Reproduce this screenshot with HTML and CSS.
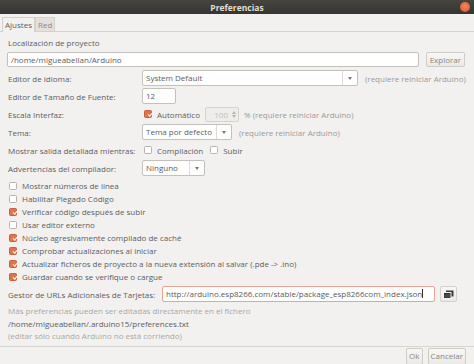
FILE: index.html
```html
<!DOCTYPE html>
<html lang="es">
<head>
    <meta charset="UTF-8">
    <title>Preferencias</title>
    <link rel="stylesheet" href="styles.css">
</head>
<body>
    <div class="window">
        <div class="titlebar">
            <span class="title">Preferencias</span>
            <span class="close"></span>
        </div>

        <div class="tabs">
            <span class="tab active">Ajustes</span>
            <span class="tab">Red</span>
        </div>

        <div class="panel">
            <div class="top-label">Localización de proyecto</div>
            <div class="path-row">
                <div class="field path">/home/migueabellan/Arduino</div>
                <span class="btn">Explorar</span>
            </div>

            <div class="form-rows">
                <div class="row">
                    <span class="row-label">Editor de idioma:</span>
                    <div class="select lang">System Default<span class="arrow"></span></div>
                    <span class="hint">(requiere reiniciar Arduino)</span>
                </div>
                <div class="row">
                    <span class="row-label">Editor de Tamaño de Fuente:</span>
                    <div class="field size">12</div>
                </div>
                <div class="row">
                    <span class="row-label">Escala Interfaz:</span>
                    <span class="check on"></span>
                    <span class="opt">Automático</span>
                    <div class="spin">100<span class="spin-arrows"></span></div>
                    <span class="hint dark">% (requiere reiniciar Arduino)</span>
                </div>
                <div class="row">
                    <span class="row-label">Tema:</span>
                    <div class="select theme">Tema por defecto<span class="arrow"></span></div>
                    <span class="hint">(requiere reiniciar Arduino)</span>
                </div>
                <div class="row">
                    <span class="row-label">Mostrar salida detallada mientras:</span>
                    <span class="check"></span>
                    <span class="opt">Compilación</span>
                    <span class="check"></span>
                    <span class="opt">Subir</span>
                </div>
                <div class="row">
                    <span class="row-label">Advertencias del compilador:</span>
                    <div class="select warn">Ninguno<span class="arrow"></span></div>
                </div>
            </div>

            <ul class="checks">
                <li><span class="check"></span>Mostrar números de línea</li>
                <li><span class="check"></span>Habilitar Plegado Código</li>
                <li><span class="check on"></span>Verificar código después de subir</li>
                <li><span class="check"></span>Usar editor externo</li>
                <li><span class="check on"></span>Núcleo agresivamente compilado de caché</li>
                <li><span class="check on"></span>Comprobar actualizaciones al iniciar</li>
                <li><span class="check on"></span>Actualizar ficheros de proyecto a la nueva extensión al salvar (.pde -&gt; .ino)</li>
                <li><span class="check on"></span>Guardar cuando se verifique o cargue</li>
            </ul>

            <div class="url-row">
                <span class="url-label">Gestor de URLs Adicionales de Tarjetas:</span>
                <div class="field url">http://arduino.esp8266.com/stable/package_esp8266com_index.json<span class="caret"></span></div>
                <span class="icon-btn">
                    <svg width="11" height="9" viewBox="0 0 11 9">
                        <rect x="3" y="0.5" width="7.5" height="6" fill="#3a3a3a"/>
                        <rect x="0.5" y="2.5" width="7.5" height="6" fill="#2b2b2b" stroke="#f4f4f4" stroke-width="1"/>
                        <rect x="1.5" y="4" width="5.5" height="3.5" fill="#4a4a4a"/>
                    </svg>
                </span>
            </div>

            <div class="notes">
                <div>Más preferencias pueden ser editadas directamente en el fichero</div>
                <div class="dark">/home/migueabellan/.arduino15/preferences.txt</div>
                <div>(editar sólo cuando Arduino no está corriendo)</div>
            </div>
        </div>

        <div class="footer">
            <span class="btn">Ok</span>
            <span class="btn">Cancelar</span>
        </div>
    </div>
</body>
</html>
```

FILE: styles.css
```css
:root {
    --bg: #f2f1f0;
    --text: #5c5c5c;
    --muted: #9b9994;
    --border: #c4c0ba;
    --accent: #e2744c;
}

* {
    margin: 0;
    padding: 0;
    box-sizing: border-box;
}

body {
    width: 474px;
    height: 364px;
    overflow: hidden;
    background-color: var(--bg);
    font-family: 'Open Sans', 'Noto Sans', sans-serif;
    font-size: 8px;
    color: var(--text);
    white-space: nowrap;
}

.window {
    height: 364px;
    display: flex;
    flex-direction: column;
}

/* barra de título */
.titlebar {
    height: 14px;
    flex-shrink: 0;
    background: linear-gradient(#45443f, #363531);
    display: flex;
    align-items: center;
    justify-content: center;
    position: relative;
}

.title {
    color: #e2ded6;
    font-weight: 700;
    font-size: 8.5px;
}

.close {
    position: absolute;
    right: 4px;
    top: 2px;
    width: 10px;
    height: 10px;
    border-radius: 50%;
    background: radial-gradient(circle at 50% 40%, #f7845b, #e0512a);
}

/* pestañas */
.tabs {
    height: 18px;
    flex-shrink: 0;
    display: flex;
    align-items: flex-end;
    padding-left: 2px;
    border-bottom: 1px solid #d4d0ca;
}

.tab {
    height: 14px;
    padding: 0 2px;
    line-height: 13px;
    color: #8a8782;
    background-color: #e4e1dc;
    border: 1px solid #d4d0ca;
    border-bottom: none;
}

.tab.active {
    color: var(--text);
    background-color: var(--bg);
    height: 15px;
    margin-bottom: -1px;
}

/* contenido */
.panel {
    flex: 1;
    padding: 5px 9px 0 8px;
}

.top-label {
    height: 12px;
    line-height: 12px;
}

.path-row {
    margin-top: 3px;
    display: flex;
    height: 15px;
    margin-left: -1px;
}

.field {
    background-color: white;
    border: 1px solid var(--border);
    border-radius: 2px;
    height: 15px;
    line-height: 13px;
    padding: 0 3px;
    overflow: hidden;
}

.path {
    flex: 1;
}

.btn {
    display: inline-block;
    height: 15px;
    line-height: 13px;
    padding: 0 3px;
    margin-left: 7px;
    border: 1px solid #cfcbc5;
    border-radius: 2px;
    background: linear-gradient(#f8f7f6, #ebe9e6);
    color: #8a8782;
}

.form-rows {
    margin-top: 3px;
    display: flex;
    flex-direction: column;
    gap: 2px;
}

.row {
    height: 16px;
    display: flex;
    align-items: center;
}

.row-label {
    width: 134px;
    flex-shrink: 0;
}

.select {
    position: relative;
    flex-shrink: 0;
    height: 16px;
    line-height: 14px;
    padding: 0 3px;
    background-color: white;
    border: 1px solid var(--border);
    border-radius: 2px;
}

.select .arrow {
    position: absolute;
    right: 0;
    top: 0;
    bottom: 0;
    width: 15px;
    border-left: 1px solid #dedad5;
}

.select .arrow::after {
    content: '';
    position: absolute;
    left: 5px;
    top: 6px;
    border-left: 2.5px solid transparent;
    border-right: 2.5px solid transparent;
    border-top: 3px solid #7a7873;
}

.lang {
    width: 216px;
}

.theme {
    width: 90px;
}

.warn {
    width: 63px;
}

.size {
    width: 34px;
    height: 16px;
    line-height: 14px;
}

.hint {
    margin-left: 7px;
    color: var(--muted);
}

.hint.dark {
    margin-left: 5px;
}

.check {
    width: 8px;
    height: 8px;
    flex-shrink: 0;
    border: 1px solid #b7b3ad;
    border-radius: 1.5px;
    background-color: white;
    position: relative;
}

.check.on {
    background-color: var(--accent);
    border-color: #c9603b;
}

.check.on::after {
    content: '';
    position: absolute;
    left: 1.5px;
    top: 0;
    width: 4px;
    height: 2px;
    border-left: 1.3px solid white;
    border-bottom: 1.3px solid white;
    transform: rotate(-50deg) translate(-0.5px, 1.5px);
}

.row .check {
    margin-left: 2px;
}

.opt {
    margin-left: 5px;
    margin-right: 5px;
}

.spin {
    position: relative;
    width: 34px;
    height: 15px;
    line-height: 13px;
    padding-right: 10px;
    text-align: right;
    color: #c2bfba;
    background-color: #eeedeb;
    border: 1px solid #d6d3ce;
    border-radius: 2px;
}

.spin-arrows::before,
.spin-arrows::after {
    content: '';
    position: absolute;
    right: 2px;
    border-left: 2px solid transparent;
    border-right: 2px solid transparent;
}

.spin-arrows::before {
    top: 3px;
    border-bottom: 3px solid #b9b6b1;
}

.spin-arrows::after {
    bottom: 3px;
    border-top: 3px solid #b9b6b1;
}

/* lista de casillas */
.checks {
    list-style: none;
    margin-top: 3px;
}

.checks li {
    height: 13px;
    display: flex;
    align-items: center;
    gap: 5px;
    padding-left: 1px;
}

.url-row {
    margin-top: 3px;
    height: 16px;
    display: flex;
    align-items: center;
}

.url-label {
    width: 154px;
    flex-shrink: 0;
}

.url {
    width: 273px;
    height: 16px;
    line-height: 14px;
    border-color: #e5a494;
    color: #5a5a5a;
    position: relative;
}

.caret {
    display: inline-block;
    width: 1px;
    height: 9px;
    background-color: #333;
    vertical-align: -1px;
}

.icon-btn {
    margin-left: 5px;
    width: 17px;
    height: 16px;
    display: flex;
    align-items: center;
    justify-content: center;
    border: 1px solid #d4d0ca;
    border-radius: 2px;
    background: linear-gradient(#f8f7f6, #ebe9e6);
}

.notes {
    margin-top: 3px;
    line-height: 12.5px;
    color: #a9a7a2;
}

.notes .dark {
    color: var(--text);
}

/* pie con botones */
.footer {
    height: 18px;
    flex-shrink: 0;
    border-top: 1px solid #d8d5d0;
    display: flex;
    justify-content: flex-end;
    align-items: flex-start;
    padding: 1px 8px 0 0;
}

.footer .btn {
    height: 17px;
    padding: 0 2px;
    margin-left: 5px;
}
```
